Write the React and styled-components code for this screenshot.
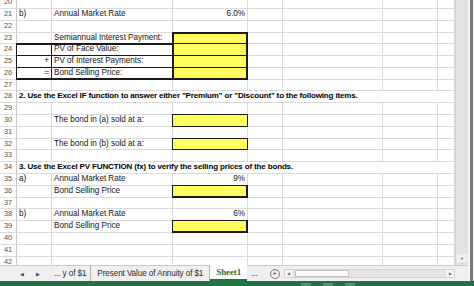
import styled, { createGlobalStyle } from "styled-components";

const GlobalStyle = createGlobalStyle`
  *, *::before, *::after { box-sizing: border-box; }
  html, body { margin: 0; padding: 0; background: #fff; }
  body {
    width: 474px;
    height: 286px;
    overflow: hidden;
    font-family: "Liberation Sans", Arial, sans-serif;
    color: #222;
  }
`;

const COLS = "17px 35px 121px 75px 35px 100px 55px 17px";
const ROW_H = 11.8;
const YELLOW = "#ffff62";

const Window = styled.div`
  width: 474px;
  height: 286px;
  display: flex;
  flex-direction: column;
  background: #fff;
`;

const Body = styled.div`
  flex: none;
  height: 281px;
  display: flex;
`;

const Workspace = styled.div`
  width: 468px;
  display: flex;
  flex-direction: column;
`;

const Main = styled.div`
  flex: none;
  height: 265px;
  display: flex;
`;

const Pane = styled.div`
  width: 455px;
  overflow: hidden;
`;

const Sheet = styled.div`
  margin-top: -2.9px;
`;

const Row = styled.div`
  display: grid;
  grid-template-columns: ${COLS};
  height: ${ROW_H}px;
`;

const RowNum = styled.div`
  border-right: 1px solid #c8c8c8;
  border-bottom: 1px solid #dcdcdc;
  font-size: 7.4px;
  line-height: ${ROW_H - 1}px;
  text-align: center;
  color: #505050;
  background: #fff;
`;

const Cell = styled.div`
  position: relative;
  grid-column: span ${(p) => p.$span || 1};
  border-right: 1px solid ${(p) => (p.$span > 1 ? "transparent" : "#dadada")};
  border-bottom: 1px solid #dadada;
  background: ${(p) => p.$fill || "transparent"};
  padding: 0 2px;
  font-size: ${(p) => (p.$bold ? "8px" : "8.2px")};
  font-weight: ${(p) => (p.$bold ? 700 : 400)};
  letter-spacing: ${(p) => (p.$bold ? "-0.15px" : "-0.05px")};
  line-height: ${ROW_H - 1}px;
  text-align: ${(p) => p.$align || "left"};
  white-space: nowrap;
  color: ${(p) => (p.$bold ? "#000" : "#161616")};

  ${(p) =>
    p.$edge &&
    `
    &::after {
      content: "";
      position: absolute;
      top: -1px;
      left: -1px;
      right: -1px;
      bottom: -1px;
      border-style: solid;
      border-color: #1a1a1a;
      border-width: ${p.$edge
        .split(" ")
        .map((n) => n + "px")
        .join(" ")};
    }
  `}
`;

const VScroll = styled.div`
  width: 13px;
  background: #e3e3e3;
  border-left: 1px solid #d0d0d0;
  display: flex;
  flex-direction: column;
  justify-content: flex-end;
  align-items: center;
`;

const ScrollArrow = styled.div`
  width: 10px;
  height: 8px;
  display: flex;
  align-items: center;
  justify-content: center;
  font-size: 4px;
  color: #666;
  background: #f2f2f2;
  margin-bottom: 3px;
`;

const Frame = styled.div`
  width: 6px;
  background: #f4f4f4;
  display: flex;
  justify-content: center;
`;

const FrameLine = styled.div`
  width: 3px;
  background: #7a7a7a;
`;

const TabBar = styled.div`
  flex: 1;
  display: flex;
  align-items: stretch;
  background: #f0f0f0;
  border-top: 1px solid #c9c9c9;
  font-size: 8px;
  letter-spacing: -0.12px;
  color: #333;
`;

const NavArrows = styled.div`
  width: 50px;
  display: flex;
  align-items: center;
  padding-left: 20px;
  gap: 12px;
  font-size: 5px;
  color: #444;
`;

const Tab = styled.div`
  display: flex;
  align-items: center;
  padding: 0 ${(p) => p.$pad || 5}px;
  border-right: ${(p) => (p.$sep ? "1px solid #b5b5b5" : "none")};
  background: ${(p) => (p.$active ? "#fff" : "transparent")};
  color: ${(p) => (p.$active ? "#217346" : "#2a2a2a")};
  font-weight: ${(p) => (p.$active ? 700 : 400)};
  font-size: ${(p) => (p.$active ? "9px" : "8.2px")};
  font-family: ${(p) =>
    p.$active ? '"Liberation Serif", "Times New Roman", serif' : "inherit"};
  border-bottom: ${(p) => (p.$active ? "2px solid #217346" : "none")};
  margin-top: ${(p) => (p.$active ? "-1px" : "0")};
  white-space: nowrap;
`;

const AddButton = styled.div`
  width: 10px;
  height: 10px;
  margin: auto 4px auto 8px;
  border: 1px solid #7a7a7a;
  border-radius: 50%;
  display: flex;
  align-items: center;
  justify-content: center;
  font-size: 8px;
  line-height: 1;
  color: #555;
`;

const HScroll = styled.div`
  flex: 1;
  margin: 3px 13px 3px 0;
  display: flex;
  align-items: stretch;
  background: #e4e4e4;
  border: 1px solid #d2d2d2;
`;

const HArrow = styled.div`
  width: 8px;
  display: flex;
  align-items: center;
  justify-content: center;
  font-size: 4px;
  color: #666;
  background: #f6f6f6;
`;

const Thumb = styled.div`
  width: 54px;
  margin-left: 2px;
  background: #fff;
  border: 1px solid #c2c2c2;
`;

const Track = styled.div`
  flex: 1;
`;

const StatusBar = styled.div`
  flex: 1;
  background: #217346;
  display: flex;
  align-items: flex-end;
  padding-left: 301px;
  gap: 12px;
`;

const ViewIcon = styled.div`
  width: 10px;
  height: 3px;
  background: #4f946b;
`;

const rows = [
  { n: 20, cells: [] },
  {
    n: 21,
    cells: [
      { t: "b)" },
      { t: "Annual Market Rate" },
      { t: "6.0%", align: "right" },
    ],
  },
  { n: 22, cells: [] },
  {
    n: 23,
    cells: [
      {},
      { t: "Semiannual Interest Payment:" },
      { fill: YELLOW, edge: "2 2 1 2" },
    ],
  },
  {
    n: 24,
    cells: [
      { edge: "2 1 1 1" },
      { t: "PV of Face Value:", edge: "2 0 1 0" },
      { fill: YELLOW, edge: "0 2 1 2" },
    ],
  },
  {
    n: 25,
    cells: [
      { t: "+", align: "right", edge: "0 1 1 1" },
      { t: "PV of Interest Payments:", edge: "0 0 1 0" },
      { fill: YELLOW, edge: "0 2 1 2" },
    ],
  },
  {
    n: 26,
    cells: [
      { t: "=", align: "right", edge: "0 1 2 1" },
      { t: "Bond Selling Price:", edge: "0 0 2 0" },
      { fill: YELLOW, edge: "0 2 2 2" },
    ],
  },
  { n: 27, cells: [] },
  {
    n: 28,
    cells: [
      {
        t: '2. Use the Excel IF function to answer either "Premium" or "Discount" to the following items.',
        bold: true,
        span: 6,
      },
    ],
  },
  { n: 29, cells: [] },
  {
    n: 30,
    cells: [
      {},
      { t: "The bond in (a) sold at a:" },
      { fill: YELLOW, edge: "1 1 1 1" },
    ],
  },
  { n: 31, cells: [] },
  {
    n: 32,
    cells: [
      {},
      { t: "The bond in (b) sold at a:" },
      { fill: YELLOW, edge: "1 1 1 1" },
    ],
  },
  { n: 33, cells: [] },
  {
    n: 34,
    cells: [
      {
        t: "3.  Use the Excel PV FUNCTION (fx) to verify the selling prices of the bonds.",
        bold: true,
        span: 6,
      },
    ],
  },
  {
    n: 35,
    cells: [
      { t: "a)" },
      { t: "Annual Market Rate" },
      { t: "9%", align: "right" },
    ],
  },
  {
    n: 36,
    cells: [{}, { t: "Bond Selling Price" }, { fill: YELLOW, edge: "1 2 2 1" }],
  },
  { n: 37, cells: [] },
  {
    n: 38,
    cells: [
      { t: "b)" },
      { t: "Annual Market Rate" },
      { t: "6%", align: "right" },
    ],
  },
  {
    n: 39,
    cells: [{}, { t: "Bond Selling Price" }, { fill: YELLOW, edge: "1 2 2 1" }],
  },
  { n: 40, cells: [] },
  { n: 41, cells: [] },
  { n: 42, cells: [] },
];

function SheetRow({ row }) {
  const filled = row.cells.reduce((s, c) => s + (c.span || 1), 0);
  const blanks = Array.from({ length: 7 - filled });
  return (
    <Row>
      <RowNum>{row.n}</RowNum>
      {row.cells.map((c, i) => (
        <Cell
          key={i}
          $span={c.span}
          $fill={c.fill}
          $bold={c.bold}
          $align={c.align}
          $edge={c.edge}
        >
          {c.t}
        </Cell>
      ))}
      {blanks.map((_, i) => (
        <Cell key={"b" + i} />
      ))}
    </Row>
  );
}

export default function App() {
  return (
    <>
      <GlobalStyle />
      <Window>
        <Body>
          <Workspace>
            <Main>
              <Pane>
                <Sheet>
                  {rows.map((r) => (
                    <SheetRow key={r.n} row={r} />
                  ))}
                </Sheet>
              </Pane>
              <VScroll>
                <ScrollArrow>▼</ScrollArrow>
              </VScroll>
            </Main>
            <TabBar>
              <NavArrows>
                <span>◀</span>
                <span>▶</span>
              </NavArrows>
              <Tab $sep $pad={4}>
                ... y of $1
              </Tab>
              <Tab $sep $pad={6}>
                Present Value of Annuity of $1
              </Tab>
              <Tab $active $pad={6}>
                Sheet1
              </Tab>
              <Tab $pad={4}>...</Tab>
              <AddButton>+</AddButton>
              <HScroll>
                <HArrow>◀</HArrow>
                <Thumb />
                <Track />
                <HArrow>▶</HArrow>
              </HScroll>
            </TabBar>
          </Workspace>
          <Frame>
            <FrameLine />
          </Frame>
        </Body>
        <StatusBar>
          <ViewIcon />
          <ViewIcon />
          <ViewIcon />
        </StatusBar>
      </Window>
    </>
  );
}
